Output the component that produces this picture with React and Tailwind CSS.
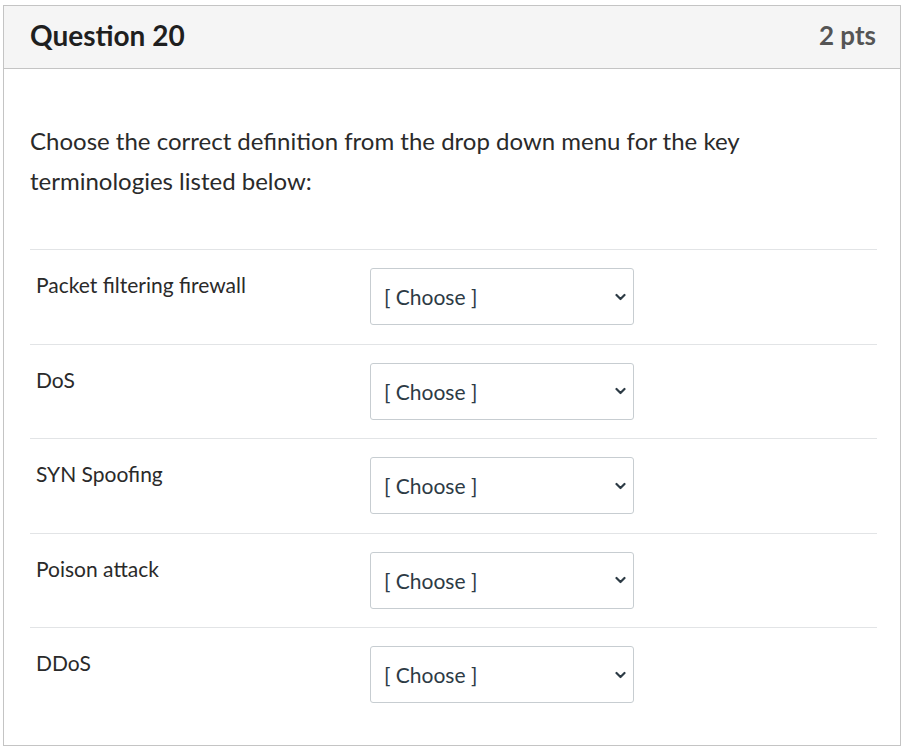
const TERMS = ["Packet filtering firewall", "DoS", "SYN Spoofing", "Poison attack", "DDoS"];

function Dropdown() {
  return (
    <div className="relative h-[57px] w-[264px]">
      <select
        className="h-full w-full appearance-none rounded-[3px] border border-[#c7cdd1] bg-white pl-[13px] text-[21px] text-[#2d3b45] outline-none"
        defaultValue=""
      >
        <option value="">[ Choose ]</option>
      </select>
      <svg
        className="pointer-events-none absolute right-[8px] top-1/2 -translate-y-1/2"
        width="11"
        height="8"
        viewBox="0 0 11 8"
        fill="none"
      >
        <path d="M1.5 2 L5.5 6 L9.5 2" stroke="#2d3b45" strokeWidth="2.2" strokeLinecap="round" strokeLinejoin="round" />
      </svg>
    </div>
  );
}

export default function App() {
  return (
    <div className="min-h-[751px] bg-white pl-[3px] pt-[5px] font-['Lato','Noto_Sans',sans-serif] text-[#2d3b45]">
      <div className="h-[741px] w-[898px] border border-[#c4c4c4]">
        <div className="flex h-[63px] items-center justify-between border-b border-[#c4c4c4] bg-[#f5f5f5] pb-[4px] pl-[26px] pr-[24px]">
          <h2 className="text-[28px] font-bold text-[#1f1f1f]">Question 20</h2>
          <span className="text-[26px] font-bold text-[#555]">2 pts</span>
        </div>

        <div className="pl-[26px] pr-[23px] pt-[52px]">
          <p className="text-[24px] leading-[40px] text-[#2a2a2a]">
            Choose the correct definition from the drop down menu for the key
            <br />
            terminologies listed below:
          </p>

          <div className="mt-[48px]">
            {TERMS.map((term) => (
              <div
                key={term}
                className="flex border-t border-[#e2e4e6] py-[18.25px]"
              >
                <div className="w-[340px] pl-[6px] pt-[4px] text-[21px] leading-[26px] text-[#2a2a2a]">
                  {term}
                </div>
                <Dropdown />
              </div>
            ))}
          </div>
        </div>
      </div>
    </div>
  );
}
